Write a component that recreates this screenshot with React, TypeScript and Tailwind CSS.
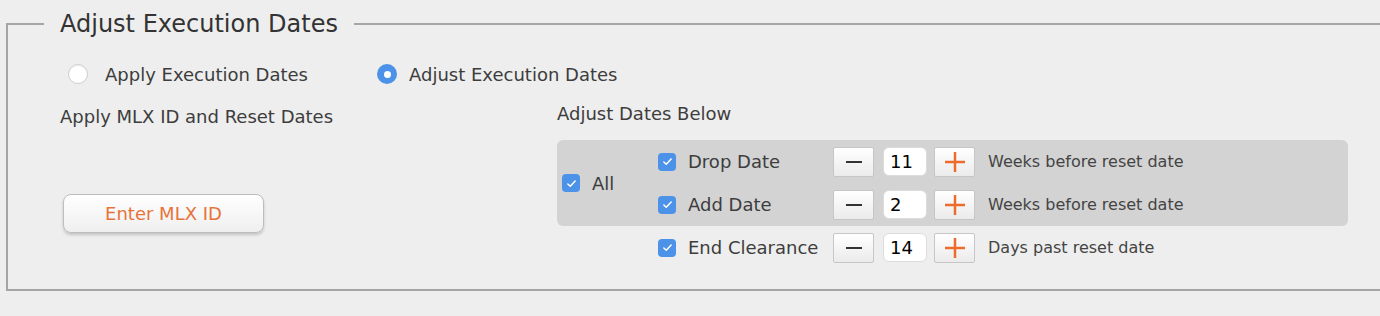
import React, { useState } from 'react';

type DateRow = {
  id: string;
  label: string;
  value: number;
  unit: string;
};

const FONT = "font-['DejaVu_Sans','Liberation_Sans',sans-serif]";

const CheckBox: React.FC<{ checked: boolean; onChange: () => void }> = ({ checked, onChange }) => (
  <button
    type="button"
    onClick={onChange}
    className={`w-[18px] h-[18px] rounded-[4px] flex items-center justify-center shrink-0 ${
      checked ? 'bg-[#4b92e8]' : 'bg-white border border-[#bbb]'
    }`}
  >
    {checked && (
      <svg width="11" height="11" viewBox="0 0 12 12" fill="none">
        <path d="M2 6.5l2.6 2.6L10 3.2" stroke="white" strokeWidth={1.6} strokeLinecap="round" strokeLinejoin="round" />
      </svg>
    )}
  </button>
);

const Radio: React.FC<{ checked: boolean; onClick: () => void }> = ({ checked, onClick }) => (
  <button
    type="button"
    onClick={onClick}
    className={`w-[20px] h-[20px] rounded-full flex items-center justify-center shrink-0 ${
      checked ? 'bg-[#4b92e8]' : 'bg-white border border-[#d0d0d0] shadow-[inset_0_1px_1px_rgba(0,0,0,0.08)]'
    }`}
  >
    {checked && <span className="w-[7px] h-[7px] rounded-full bg-white" />}
  </button>
);

const StepButton: React.FC<{ kind: 'minus' | 'plus'; onClick: () => void }> = ({ kind, onClick }) => (
  <button
    type="button"
    onClick={onClick}
    className="w-[41px] h-[30px] border border-[#c6c6c6] rounded-[2px] bg-gradient-to-b from-white to-[#ebebeb] flex items-center justify-center"
  >
    {kind === 'minus' ? (
      <svg width="18" height="18" viewBox="0 0 18 18">
        <path d="M1 9h16" stroke="#333" strokeWidth={2} />
      </svg>
    ) : (
      <svg width="22" height="22" viewBox="0 0 22 22">
        <path d="M11 1v20M1 11h20" stroke="#ec6b2d" strokeWidth={2.5} />
      </svg>
    )}
  </button>
);

const App: React.FC = () => {
  const [mode, setMode] = useState<'apply' | 'adjust'>('adjust');
  const [rows, setRows] = useState<DateRow[]>([
    { id: 'drop', label: 'Drop Date', value: 11, unit: 'Weeks before reset date' },
    { id: 'add', label: 'Add Date', value: 2, unit: 'Weeks before reset date' },
    { id: 'end', label: 'End Clearance', value: 14, unit: 'Days past reset date' },
  ]);
  const [checked, setChecked] = useState<Record<string, boolean>>({ drop: true, add: true, end: true });

  const allChecked = checked.drop && checked.add;

  const step = (id: string, delta: number) =>
    setRows((prev) => prev.map((r) => (r.id === id ? { ...r, value: Math.max(0, r.value + delta) } : r)));

  const renderRow = (row: DateRow) => (
    <div key={row.id} className="h-[43px] flex items-center">
      <CheckBox checked={checked[row.id]} onChange={() => setChecked({ ...checked, [row.id]: !checked[row.id] })} />
      <span className="ml-[12px] w-[145px] text-[18px] text-[#3d3d3d]">{row.label}</span>
      <StepButton kind="minus" onClick={() => step(row.id, -1)} />
      <input
        value={row.value}
        onChange={(e) => step(row.id, (parseInt(e.target.value) || 0) - row.value)}
        className="ml-[9px] w-[44px] h-[29px] rounded-[6px] bg-white border border-[#dcdcdc] pl-[6px] text-[18px] text-black outline-none"
      />
      <div className="ml-[7px]">
        <StepButton kind="plus" onClick={() => step(row.id, 1)} />
      </div>
      <span className="ml-[13px] text-[16px] text-[#444]">{row.unit}</span>
    </div>
  );

  return (
    <div className={`${FONT} bg-[#eeeeee] w-[1380px] h-[316px] overflow-hidden`}>
      <fieldset className="mt-[9px] ml-[6px] mr-[-20px] border-2 border-[#a5a5a5] px-0 pb-[20px]">
        <legend className="ml-[36px] px-4 text-[24px] leading-[30px] text-[#333]">Adjust Execution Dates</legend>

        {/* Mode radios */}
        <div className="mt-[23px] h-6 flex items-center">
          <div className="ml-[60px] flex items-center">
            <Radio checked={mode === 'apply'} onClick={() => setMode('apply')} />
            <span className="ml-[17px] text-[18px] text-[#3d3d3d]">Apply Execution Dates</span>
          </div>
          <div className="ml-[69px] flex items-center">
            <Radio checked={mode === 'adjust'} onClick={() => setMode('adjust')} />
            <span className="ml-[12px] text-[18px] text-[#3d3d3d]">Adjust Execution Dates</span>
          </div>
        </div>

        <div className="flex">
          {/* Left column */}
          <div className="w-[549px] pl-[52px] pt-[19px]">
            <p className="text-[18px] leading-6 text-[#3d3d3d]">Apply MLX ID and Reset Dates</p>
            <button
              type="button"
              className="mt-[65px] ml-[3px] w-[201px] h-[39px] rounded-[8px] border border-[#bdbdbd] bg-gradient-to-b from-white to-[#efefef] shadow-[0_2px_3px_rgba(0,0,0,0.18)] text-[18px] text-[#e8733a]"
            >
              Enter MLX ID
            </button>
          </div>

          {/* Right column */}
          <div className="pt-[16px]">
            <p className="text-[18px] leading-6 text-[#3d3d3d]">Adjust Dates Below</p>
            <div className="mt-[14px] w-[791px] h-[86px] rounded-[6px] bg-[#d3d3d3] flex">
              <div className="w-[101px] pl-[5px] flex items-center">
                <CheckBox
                  checked={allChecked}
                  onChange={() => setChecked({ ...checked, drop: !allChecked, add: !allChecked })}
                />
                <span className="ml-[12px] text-[18px] text-[#3d3d3d]">All</span>
              </div>
              <div className="flex flex-col">{rows.slice(0, 2).map(renderRow)}</div>
            </div>
            <div className="pl-[101px]">{renderRow(rows[2])}</div>
          </div>
        </div>
      </fieldset>
    </div>
  );
};

export default App;
